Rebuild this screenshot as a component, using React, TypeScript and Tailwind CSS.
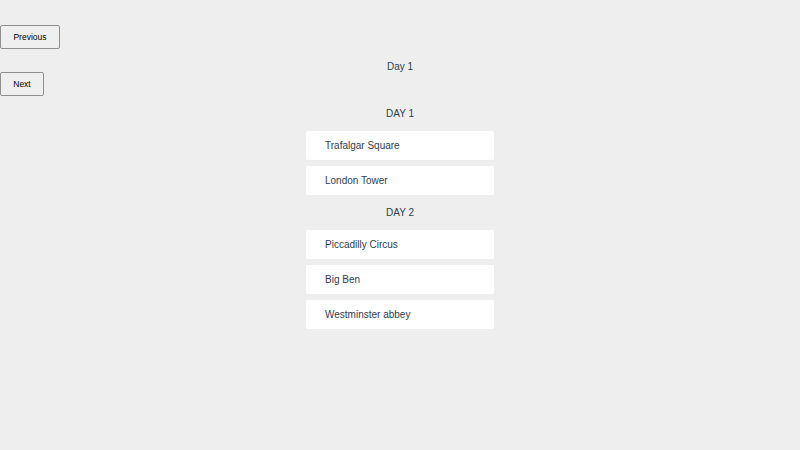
const days = [
  { title: 'DAY 1', places: ['Trafalgar Square', 'London Tower'] },
  { title: 'DAY 2', places: ['Piccadilly Circus', 'Big Ben', 'Westminster abbey'] },
];

export default function App() {
  return (
    <div className="h-[450px] overflow-hidden bg-[#eeeeee] pt-[25px] font-['Liberation_Sans',Arial,sans-serif] text-[#2c3e50]">
      {/* 操作ボタン */}
      <button className="block h-[24px] w-[60px] rounded-[2px] border border-[#8f8f8f] bg-[#efefef] text-[8.5px] text-black">
        Previous
      </button>
      <div className="mt-[12px] text-center text-[10px] leading-[12px]">Day 1</div>
      <button className="-mt-[1px] block h-[24px] w-[44px] rounded-[2px] border border-[#8f8f8f] bg-[#efefef] text-[8.5px] text-black">
        Next
      </button>

      {/* 日程リスト */}
      {days.map((day) => (
        <div key={day.title}>
          <div className="mt-[12px] text-center text-[10px] leading-[12px]">{day.title}</div>
          <div className="mt-[11px] flex flex-col gap-[6px]">
            {day.places.map((place) => (
              <div
                key={place}
                className="mx-auto flex h-[29px] w-[188px] items-center rounded-[2px] bg-white pl-[19px] text-[10px]"
              >
                {place}
              </div>
            ))}
          </div>
        </div>
      ))}
    </div>
  );
}
